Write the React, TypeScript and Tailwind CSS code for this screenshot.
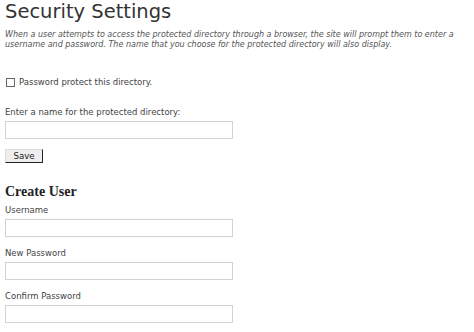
import { useState } from "react";

const font = { fontFamily: '"DejaVu Sans", Verdana, sans-serif' };

function Field({ label, top }: { label: string; top: string }) {
  const [value, setValue] = useState("");
  return (
    <div className={top}>
      <label className="block text-[8.5px] leading-[10px] text-[#444]">{label}</label>
      <input
        value={value}
        onChange={e => setValue(e.target.value)}
        className="mt-[4px] block w-[228px] h-[18px] border border-[#d2d2d2] bg-white outline-none"
      />
    </div>
  );
}

export default function App() {
  const [checked, setChecked] = useState(false);

  return (
    <div className="w-[474px] h-[332px] bg-white px-[5px] overflow-hidden" style={font}>
      {/* Header */}
      <h1 className="pt-[1px] text-[19.5px] leading-[22px] text-[#333] font-normal">Security Settings</h1>
      <p className="mt-[7px] text-[8px] leading-[10px] italic text-[#555]">
        When a user attempts to access the protected directory through a browser, the site will prompt them to enter a
        username and password. The name that you choose for the protected directory will also display.
      </p>

      {/* Protect checkbox */}
      <label className="mt-[27px] flex items-center gap-[4px] text-[8.5px] leading-[10px] text-[#444]">
        <input
          type="checkbox"
          checked={checked}
          onChange={() => setChecked(c => !c)}
          className="m-0 ml-[1px] w-[9px] h-[9px] appearance-none border border-[#666] bg-white"
        />
        Password protect this directory.
      </label>

      <Field label="Enter a name for the protected directory:" top="mt-[20px]" />

      <button className="mt-[10px] block w-[38px] h-[14px] bg-[#eee] border border-t-[#ddd] border-l-[#ddd] border-b-[#222] border-r-[#222] text-[8.6px] leading-[12px] text-[#222]">
        Save
      </button>

      {/* Create user */}
      <h2
        className="mt-[20px] text-[14px] leading-[17px] font-bold text-[#222]"
        style={{ fontFamily: '"Liberation Serif", Georgia, serif' }}
      >
        Create User
      </h2>
      <Field label="Username" top="mt-[5px]" />
      <Field label="New Password" top="mt-[11px]" />
      <Field label="Confirm Password" top="mt-[11px]" />
    </div>
  );
}
